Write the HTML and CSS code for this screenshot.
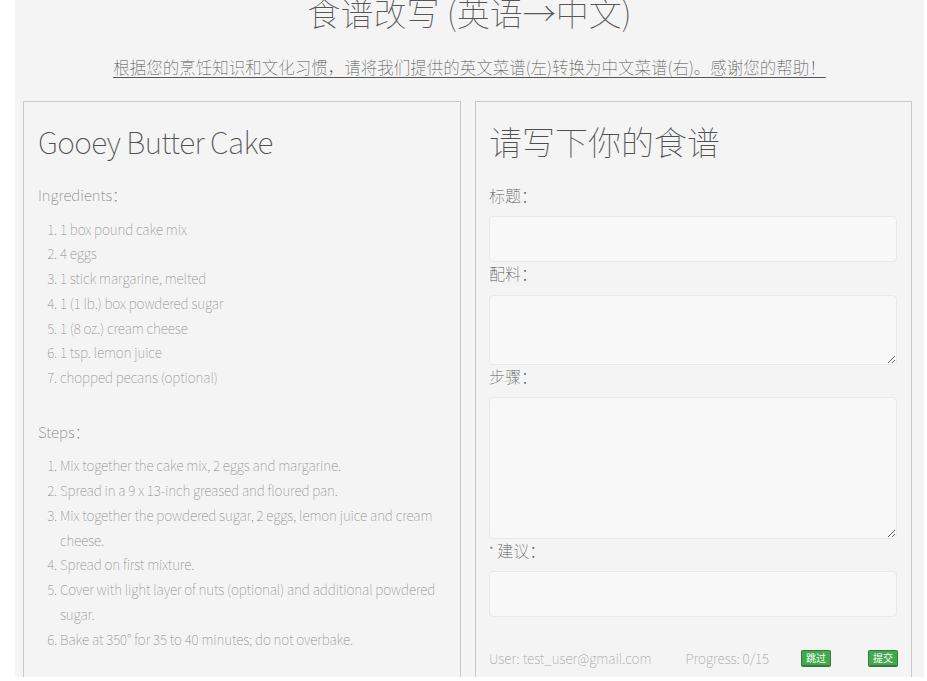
FILE: index.html
```html
<!DOCTYPE html>
<html lang="zh">
<head>
<meta charset="utf-8">
<title>食谱改写</title>
<link rel="stylesheet" href="styles.css">
</head>
<body>
<div class="page">
  <h1 class="title">食谱改写 (英语→中文)</h1>
  <p class="subtitle"><u>根据您的烹饪知识和文化习惯，请将我们提供的英文菜谱(左)转换为中文菜谱(右)。感谢您的帮助！</u></p>
  <div class="columns">
    <section class="panel recipe">
      <h2 class="recipe-title">Gooey Butter Cake</h2>
      <h3 class="section-label">Ingredients：</h3>
      <ol class="list">
        <li>1 box pound cake mix</li>
        <li>4 eggs</li>
        <li>1 stick margarine, melted</li>
        <li>1 (1 lb.) box powdered sugar</li>
        <li>1 (8 oz.) cream cheese</li>
        <li>1 tsp. lemon juice</li>
        <li>chopped pecans (optional)</li>
      </ol>
      <h3 class="section-label steps-label">Steps：</h3>
      <ol class="list">
        <li>Mix together the cake mix, 2 eggs and margarine.</li>
        <li>Spread in a 9 x 13-inch greased and floured pan.</li>
        <li>Mix together the powdered sugar, 2 eggs, lemon juice and cream cheese.</li>
        <li>Spread on first mixture.</li>
        <li>Cover with light layer of nuts (optional) and additional powdered sugar.</li>
        <li>Bake at 350° for 35 to 40 minutes; do not overbake.</li>
      </ol>
    </section>
    <section class="panel form">
      <h2 class="form-title">请写下你的食谱</h2>
      <label class="field-label">标题：</label>
      <input class="field field-input" type="text">
      <label class="field-label">配料：</label>
      <textarea class="field area-ingredients"></textarea>
      <label class="field-label">步骤：</label>
      <textarea class="field area-steps"></textarea>
      <label class="field-label"><span class="star">*</span> 建议：</label>
      <input class="field field-input" type="text">
      <div class="footer">
        <span class="user">User: test_user@gmail.com</span>
        <span class="progress">Progress: 0/15</span>
        <button class="btn btn-skip">跳过</button>
        <button class="btn btn-submit">提交</button>
      </div>
    </section>
  </div>
</div>
</body>
</html>
```

FILE: styles.css
```css
html, body {
  margin: 0;
  padding: 0;
  background: #ffffff;
}

body {
  font-family: "Noto Sans CJK SC", "Noto Sans", sans-serif;
  font-weight: 100;
  color: #555;
}

.page {
  margin-left: 15px;
  width: 909px;
  height: 677px;
  overflow: hidden;
  background: #f4f4f4;
}

.title {
  margin: -8px 0 0;
  font-size: 33px;
  line-height: 40px;
  font-weight: 100;
  text-align: center;
  color: #555;
}

.subtitle {
  margin: 23px 0 0;
  font-size: 16.5px;
  line-height: 24px;
  text-align: center;
  color: #505050;
}

.subtitle u {
  text-decoration-color: #555;
  text-underline-offset: 3px;
}

.columns {
  display: grid;
  grid-template-columns: 438px 437px;
  column-gap: 14px;
  padding-left: 8px;
  margin-top: 22px;
}

.panel {
  box-sizing: border-box;
  border: 1px solid #c8c8c8;
  height: 700px;
}

.recipe {
  padding: 0 14px;
}

.form {
  padding: 0 13px;
}

.recipe-title,
.form-title {
  margin: 17px 0 0;
  font-size: 30px;
  line-height: 44px;
  font-weight: 100;
  letter-spacing: -0.6px;
  color: #4f4f4f;
}

.form-title {
  font-size: 33px;
  letter-spacing: 0;
}

.section-label {
  margin: 20px 0 0;
  font-size: 15px;
  line-height: 24px;
  font-weight: 100;
  color: #7c7c7c;
}

.steps-label {
  margin-top: 30px;
}

.list {
  margin: 9.6px 0 0;
  padding-left: 22px;
  font-size: 13.5px;
  line-height: 24.75px;
  color: #8e8e8e;
  letter-spacing: -0.1px;
}

.field-label {
  display: block;
  margin-top: 0;
  font-size: 16px;
  line-height: 22px;
  color: #555;
  font-weight: 100;
}

.form-title + .field-label {
  margin-top: 21px;
}

.star {
  font-size: 11px;
  vertical-align: top;
}

.field {
  display: block;
  box-sizing: border-box;
  width: 408px;
  margin: 10px 0 0;
  background: #f8f8f8;
  border: 1px solid #e8e8e8;
  border-radius: 4px;
  font: inherit;
  outline: none;
}

.field-input {
  height: 46px;
}

.area-ingredients {
  height: 70px;
  margin-top: 11px;
  resize: vertical;
}

.area-steps {
  height: 142px;
  resize: vertical;
}

.footer {
  display: flex;
  align-items: center;
  margin-top: 31px;
  font-size: 13.5px;
  line-height: 20px;
  color: #a0a0a0;
}

.progress {
  margin-left: 34px;
}

.btn {
  font-family: inherit;
  font-size: 10px;
  line-height: 13px;
  height: 17px;
  width: 30px;
  padding: 0;
  color: #fff;
  background: #44a84c;
  border: 1px solid #2f7d36;
  border-bottom-width: 2px;
  border-radius: 2px;
  font-weight: 400;
}

.btn-skip {
  margin-left: 32px;
}

.btn-submit {
  margin-left: auto;
}
```
